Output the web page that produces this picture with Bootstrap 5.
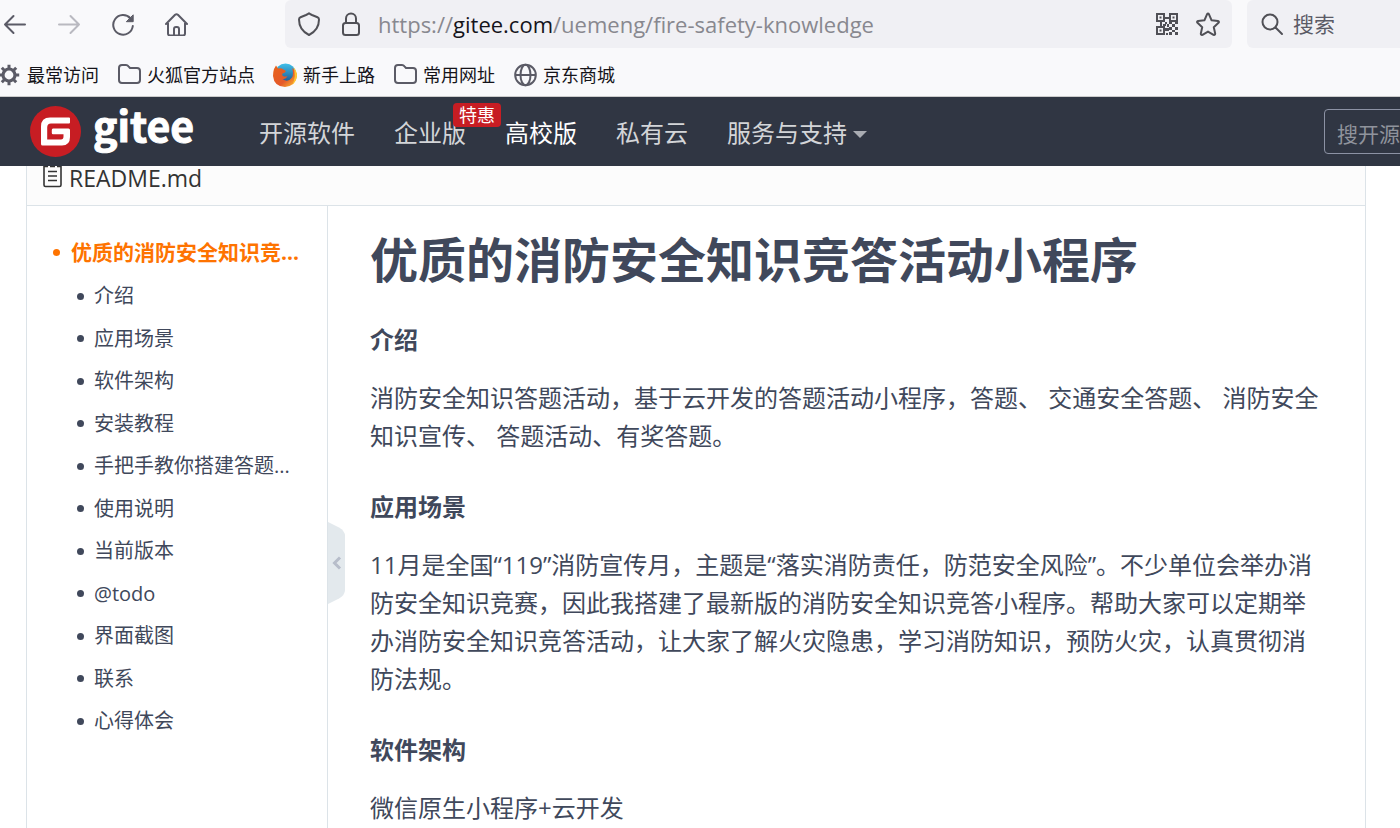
<!DOCTYPE html>
<html lang="zh-CN">
<head>
<meta charset="utf-8">
<meta name="viewport" content="width=device-width, initial-scale=1">
<title>fire-safety-knowledge - Gitee</title>
<link href="https://cdn.jsdelivr.net/npm/bootstrap@5.3.0/dist/css/bootstrap.min.css" rel="stylesheet">
<style>
  :root { --ink: #40485b; --line: #dce3e8; --chrome: #f9f9fb; --field: #f0f0f4; --icon: #5b5b66; }
  body { font-family: "Open Sans", "Noto Sans CJK SC", sans-serif; color: var(--ink); background: #fff; overflow: hidden; min-height: 100vh; }
  svg { display: block; flex: none; }
  button.bare { border: 0; background: none; padding: 0; color: inherit; }
  button.bare:disabled { color: #b9b9c0; }

  /* browser chrome */
  .browser-bar { background: var(--chrome); height: 48px; color: var(--icon); }
  .tool-group { padding-left: 3px; gap: 30px; margin-right: 96px; }
  .address { background: var(--field); border-radius: 6px; padding: 0 12px; gap: 18px; color: #505056; margin-right: 15px; min-width: 0; }
  .address-text { font-size: 22px; line-height: 48px; color: #88888f; white-space: nowrap; outline: 0; }
  .address-text b { font-weight: 400; color: #15141a; }
  .find { background: var(--field); border-radius: 6px 0 0 6px; width: 153px; padding-left: 13px; gap: 9px; color: #505056; }
  .find input, .find input:focus { border: 0; background: none; padding: 0; font-size: 21px; line-height: 48px; box-shadow: none; }
  .find input::placeholder { color: #5b5b66; opacity: 1; }
  .bookmarks { background: var(--chrome); height: 49px; gap: 18px; border-bottom: 1px solid #ccc; padding-top: 6px; color: var(--icon); }
  .bookmarks a { display: flex; align-items: center; gap: 6px; color: #15141a; text-decoration: none; font-size: 18px; line-height: 24px; white-space: nowrap; }
  .bookmarks svg { color: var(--icon); }

  /* site header */
  .site-nav { background: #303643; height: 69px; padding: 0 0 0 30px; flex-wrap: nowrap; justify-content: flex-start; overflow: hidden; }
  .site-brand { gap: 12px; width: 229px; color: #fff; text-decoration: none; }
  .site-word { font: 700 41px/50px "Noto Sans CJK SC", sans-serif; padding-bottom: 16px; -webkit-text-stroke: 1px #fff; }
  .site-menu { gap: 39px; }
  .site-menu .nav-link { padding: 2px 0 0; color: #d3d5d8; font-size: 24px; line-height: 36px; white-space: nowrap; }
  .site-menu .nav-link.active { color: #fff; }
  .site-menu .dropdown-toggle::after { border-top: 7px solid; border-left: 7px solid transparent; border-right: 7px solid transparent; margin-left: 6px; vertical-align: 4px; color: #a9acb2; }
  .promo { position: absolute; left: 59px; top: -10px; background: #c71d23; color: #fff; font-size: 18px; line-height: 24px; padding: 0 6px; border-radius: 4px; }
  .site-search { margin-left: auto; width: 76px; flex: none; }
  .site-search input, .site-search input:focus { width: 300px; height: 45px; border: 1px solid #8c92a4; border-radius: 4px; background: none; padding: 4px 12px 0; font-size: 21px; color: #fff; box-shadow: none; }
  .site-search input::placeholder { color: #8f939c; opacity: 1; }

  /* readme panel */
  .readme { margin: 0 34px 0 26px; border: 1px solid var(--line); border-width: 0 1px; min-height: calc(100vh - 166px); }
  .readme-head { height: 40px; padding: 0 0 0 15px; gap: 5px; background: #fcfcfc; border-bottom: 1px solid var(--line); color: #333; font-size: 23px; line-height: 24px; }
  .toc { width: 301px; flex: none; border-right: 1px solid var(--line); padding: 26px 24px 0 26px; font-size: 20px; line-height: 42px; }
  .toc a { display: flex; align-items: center; gap: 10px; color: var(--ink); text-decoration: none; white-space: nowrap; }
  .toc a::before { content: ""; flex: none; width: 7px; height: 7px; border-radius: 50%; background: currentColor; }
  .toc .current { color: #fe7300; font-weight: 700; font-size: 21px; line-height: 40px; gap: 11px; }
  .toc ul { height: 468px; padding-left: 24px; margin: 3px 0 0; }
  .article { padding: 28px 42px 0; font-size: 24px; line-height: 38px; position: relative; }
  .article h1 { font-size: 48px; line-height: 52px; font-weight: 700; margin: 0 0 37px; }
  .article h2 { font-size: 24px; line-height: 34px; font-weight: 700; margin: 35px 0 22px; }
  .article p { margin: 0; }
  .fold { position: absolute; left: 0; top: 316px; }
</style>
</head>
<body class="d-flex flex-column">

<div class="browser-bar d-flex">
  <div class="tool-group d-flex align-items-center">
    <button class="bare" type="button" aria-label="后退"><svg width="24" height="24" fill="none" stroke="currentColor" stroke-width="2" stroke-linecap="round" stroke-linejoin="round"><path d="M2 12.500H22M10.500 4L2 12.500 10.500 21"/></svg></button>
    <button class="bare" type="button" aria-label="前进" disabled><svg width="24" height="24" fill="none" stroke="currentColor" stroke-width="2" stroke-linecap="round" stroke-linejoin="round"><path d="M2 12.500H22M13.500 4L22 12.500 13.500 21"/></svg></button>
    <button class="bare" type="button" aria-label="刷新"><svg width="24" height="24" fill="none" stroke="currentColor" stroke-width="2" stroke-linecap="round"><path d="M21.800 14A9.800 9.800 0 1 1 19.500 6.500"/><path d="M22.200 3.200v6.500h-6.500z" fill="currentColor" stroke-width="1" stroke-linejoin="round"/></svg></button>
    <button class="bare" type="button" aria-label="主页"><svg width="24" height="24" fill="none" stroke="currentColor" stroke-width="2" stroke-linecap="round" stroke-linejoin="round"><path d="M1 12L10.100 2.800Q11.500 1.600 12.900 2.800L22 12M3 11v10.500q0 2 2 2h13q2 0 2-2V11M9 23v-6q0-2 2-2h1q2 0 2 2v6"/></svg></button>
  </div>
  <div class="address d-flex align-items-center flex-fill">
    <svg width="24" height="24" fill="none" stroke="currentColor" stroke-width="2" stroke-linejoin="round"><path d="M12 1.200Q13 2 15 3l5.500 2.200Q22 5.800 22 7.500C22 15 18 20 12 23 6 20 2 15 2 7.500 2 5.800 3.500 5.200 3.500 5.200L9 3Q11 2 12 1.200z"/></svg>
    <svg width="21" height="24" fill="none" stroke="currentColor" stroke-width="2"><rect x="4" y="11" width="16" height="12" rx="2.500"/><path d="M7 11V6.500a5 5 0 0 1 10 0V11"/></svg>
    <div class="address-text flex-fill" role="textbox" contenteditable="true" spellcheck="false" aria-label="网址">https://<b>gitee.com</b>/uemeng/fire-safety-knowledge</div>
    <button class="bare" type="button" aria-label="二维码"><svg width="22" height="22" fill="currentColor"><path fill-rule="evenodd" d="M0 0h9v9H0zM2 2v5h5V2zM13 0h9v9h-9zM15 2v5h5V2zM0 13h9v9H0zM2 15v5h5v-5z"/><path d="M3.500 3.500h2v2h-2zM16.500 3.500h2v2h-2zM3.500 16.500h2v2h-2zM9 4h4v2H9zM4 9h2v4H4zM9 9h2v2H9zM13 9h3v2h-3zM7 11h3v2H7zM11 11h2v3h-2zM16 11h3v3h-3zM19 9h3v2h-3zM13 14h3v3h-3zM9 15h4v3H9zM16 17h3v2h-3zM19 14h3v3h-3zM13 19h3v3h-3zM19 19h3v3h-3zM10 20h2v2h-2z"/></svg></button>
    <button class="bare" type="button" aria-label="收藏"><svg width="24" height="24" fill="none" stroke="currentColor" stroke-width="2" stroke-linejoin="round"><path d="M11 2.400Q12 .800 13 2.400L15.600 8.300 21.900 9Q23.600 9.500 22.500 10.800L17.800 15.200 19.200 21.600Q19.200 23.400 17.500 22.800L12 19.600 6.500 22.800Q4.800 23.400 4.800 21.600L6.200 15.200 1.500 10.800Q.400 9.500 2.100 9L8.400 8.300z"/></svg></button>
  </div>
  <label class="find d-flex align-items-center">
    <svg width="24" height="24" fill="none" stroke="currentColor" stroke-width="2" stroke-linecap="round"><circle cx="10" cy="10" r="7.500"/><path d="M15.500 15.500L22 22"/></svg>
    <input class="form-control" type="text" placeholder="搜索" aria-label="搜索">
  </label>
</div>

<nav class="bookmarks d-flex align-items-center" aria-label="书签">
  <a href="#"><svg width="21" height="24" viewBox="3 0 21 24" fill="none" stroke="currentColor"><circle cx="12" cy="12" r="6" stroke-width="3.200"/><path stroke-width="3" d="M12 1.800v4M12 18.200v4M1.800 12h4M18.200 12h4M4.800 4.800l3 3M16.200 16.200L19.200 19.200M4.800 19.200l3-3M16.200 7.800L19.200 4.800"/></svg>最常访问</a>
  <a href="#"><svg width="24" height="24" fill="none" stroke="currentColor" stroke-width="2" stroke-linejoin="round"><path d="M2 5q0-3 3-3h4q1.500 0 2.500 1.300L13 5h7q3 0 3 3v9q0 3-3 3H5q-3 0-3-3z"/></svg>火狐官方站点</a>
  <a href="#"><svg width="24" height="24"><defs><linearGradient id="fx" x1="0" y1="0" x2="1" y2="1"><stop offset="0" stop-color="#e8641a"/><stop offset=".6" stop-color="#e4582a"/><stop offset="1" stop-color="#ffcb2e"/></linearGradient><linearGradient id="sky" x2="0" y2="1"><stop offset="0" stop-color="#3fc0ea"/><stop offset="1" stop-color="#1c4a86"/></linearGradient></defs><circle cx="12.500" cy="11" r="10.500" fill="url(#sky)"/><path fill="url(#fx)" d="M1 6L3 2.500 5 5.500Q8 4.500 10.500 6.500L13 8Q12 10 9.500 10.500 8.500 12 10 13 12 14 14.500 13 13 16.500 9.500 16 15 20 19 14.500 21 11 19 5 24 8 24 13 22.500 23 12 24 1 23.500 0 13 0 9 1 6z"/><path fill="#ffc530" d="M20.500 4Q24 8 24 13q-1 6-4.500 8.500Q22.500 15 21.500 10 21.500 7 20.500 4z"/></svg>新手上路</a>
  <a href="#"><svg width="24" height="24" fill="none" stroke="currentColor" stroke-width="2" stroke-linejoin="round"><path d="M2 5q0-3 3-3h4q1.500 0 2.500 1.300L13 5h7q3 0 3 3v9q0 3-3 3H5q-3 0-3-3z"/></svg>常用网址</a>
  <a href="#"><svg width="24" height="24" fill="none" stroke="currentColor" stroke-width="2"><circle cx="12.500" cy="12" r="10.300"/><ellipse cx="12.500" cy="12" rx="5" ry="10.300"/><path d="M2 12h21"/></svg>京东商城</a>
</nav>

<nav class="navbar site-nav" aria-label="Gitee">
  <a class="site-brand d-flex align-items-center" href="#">
    <svg width="51" height="51"><circle cx="25.500" cy="25.500" r="25.500" fill="#c71d23"/><path fill="#fff" d="M39 11.500H20Q11 11.500 11 20.500V38Q11 39.500 12.500 39.500H32Q40 39.500 40 31V24Q40 22.500 38.500 22.500H23Q21.800 22.500 21.800 24V27Q21.800 28.300 23 28.300H33.500V30.500Q33.500 33.500 31 33.500H17.200V21.500Q17.200 17.500 21 17.500H39Q40 17.500 40 16.500V12.500Q40 11.500 39 11.500z"/></svg>
    <span class="site-word">gitee</span>
  </a>
  <ul class="nav site-menu flex-nowrap">
    <li class="nav-item"><a class="nav-link" href="#">开源软件</a></li>
    <li class="nav-item position-relative"><a class="nav-link" href="#">企业版</a><span class="promo text-nowrap">特惠</span></li>
    <li class="nav-item"><a class="nav-link active" href="#">高校版</a></li>
    <li class="nav-item"><a class="nav-link" href="#">私有云</a></li>
    <li class="nav-item dropdown"><a class="nav-link dropdown-toggle" href="#" role="button" data-bs-toggle="dropdown">服务与支持</a></li>
  </ul>
  <form class="site-search"><input class="form-control" type="search" placeholder="搜开源" aria-label="搜开源"></form>
</nav>

<main class="readme d-flex flex-column flex-fill">
  <header class="readme-head d-flex align-items-start">
    <svg width="22" height="22" fill="none" stroke="currentColor" stroke-width="2"><path d="M2 0V19q0 1.500 1.500 1.500h14q1.500 0 1.500-1.500V0M6 5.500h9M6 10h9M6 14.500h9M2 .500h4M15 .500h4M8 .500h5" stroke-width="1.600"/></svg>
    <span>README.md</span>
  </header>
  <div class="d-flex flex-fill">
    <nav class="toc" aria-label="目录">
      <a class="current" href="#top">优质的消防安全知识竞...</a>
      <ul class="list-unstyled d-flex flex-column">
        <li class="flex-fill"><a href="#intro">介绍</a></li>
        <li class="flex-fill"><a href="#scene">应用场景</a></li>
        <li class="flex-fill"><a href="#arch">软件架构</a></li>
        <li class="flex-fill"><a href="#">安装教程</a></li>
        <li class="flex-fill"><a href="#">手把手教你搭建答题...</a></li>
        <li class="flex-fill"><a href="#">使用说明</a></li>
        <li class="flex-fill"><a href="#">当前版本</a></li>
        <li class="flex-fill"><a href="#">@todo</a></li>
        <li class="flex-fill"><a href="#">界面截图</a></li>
        <li class="flex-fill"><a href="#">联系</a></li>
        <li class="flex-fill"><a href="#">心得体会</a></li>
      </ul>
    </nav>
    <article class="article flex-fill">
      <button class="bare fold" type="button" aria-label="收起目录"><svg width="17" height="82"><path fill="#e3e9ed" d="M0 0L11 5.500Q17 9 17 14V68Q17 73 11 76.500L0 82z"/><path d="M12 35.500L6.500 41 12 46.500" fill="none" stroke="#b7bdca" stroke-width="3"/></svg></button>
      <h1 id="top">优质的消防安全知识竞答活动小程序</h1>
      <h2 id="intro">介绍</h2>
      <p>消防安全知识答题活动，基于云开发的答题活动小程序，答题、 交通安全答题、 消防安全知识宣传、 答题活动、有奖答题。</p>
      <h2 id="scene">应用场景</h2>
      <p>11月是全国“119”消防宣传月，主题是“落实消防责任，防范安全风险”。不少单位会举办消防安全知识竞赛，因此我搭建了最新版的消防安全知识竞答小程序。帮助大家可以定期举办消防安全知识竞答活动，让大家了解火灾隐患，学习消防知识，预防火灾，认真贯彻消防法规。</p>
      <h2 id="arch">软件架构</h2>
      <p>微信原生小程序+云开发</p>
    </article>
  </div>
</main>
<script src="https://cdn.jsdelivr.net/npm/bootstrap@5.3.0/dist/js/bootstrap.bundle.min.js"></script>
</body>
</html>
